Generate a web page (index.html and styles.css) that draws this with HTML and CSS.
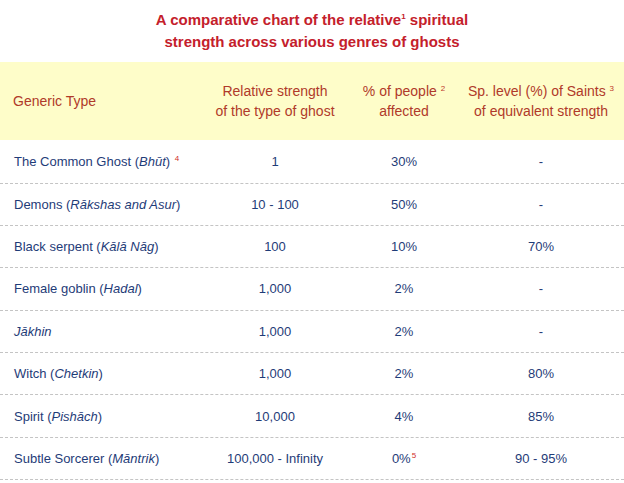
FILE: index.html
```html
<!DOCTYPE html>
<html>
<head>
<meta charset="utf-8">
<link rel="stylesheet" href="styles.css">
</head>
<body>
<div class="page">
  <h1 class="title">A comparative chart of the relative<sup>1</sup> spiritual<br>strength across various genres of ghosts</h1>
  <div class="head">
    <div class="c1">Generic Type</div>
    <div class="cc">Relative strength<br>of the type of ghost</div>
    <div class="cc">% of people <sup>2</sup><br>affected</div>
    <div class="cc wide">Sp. level (%) of Saints <sup>3</sup><br>of equivalent strength</div>
  </div>
  <div class="rows">
    <div class="row"><div class="c1">The Common Ghost (<i>Bhūt</i>) <sup>4</sup></div><div class="cc">1</div><div class="cc">30%</div><div class="cc">-</div></div>
    <div class="row"><div class="c1">Demons (<i>Rākshas and Asur</i>)</div><div class="cc">10 - 100</div><div class="cc">50%</div><div class="cc">-</div></div>
    <div class="row"><div class="c1">Black serpent (<i>Kālā Nāg</i>)</div><div class="cc">100</div><div class="cc">10%</div><div class="cc">70%</div></div>
    <div class="row"><div class="c1">Female goblin (<i>Hadal</i>)</div><div class="cc">1,000</div><div class="cc">2%</div><div class="cc">-</div></div>
    <div class="row"><div class="c1"><i>Jākhin</i></div><div class="cc">1,000</div><div class="cc">2%</div><div class="cc">-</div></div>
    <div class="row"><div class="c1">Witch (<i>Chetkin</i>)</div><div class="cc">1,000</div><div class="cc">2%</div><div class="cc">80%</div></div>
    <div class="row"><div class="c1">Spirit (<i>Pishāch</i>)</div><div class="cc">10,000</div><div class="cc">4%</div><div class="cc">85%</div></div>
    <div class="row"><div class="c1">Subtle Sorcerer (<i>Māntrik</i>)</div><div class="cc">100,000 - Infinity</div><div class="cc">0%<sup>5</sup></div><div class="cc">90 - 95%</div></div>
  </div>
</div>
</body>
</html>
```
FILE: styles.css
```css
html, body {
  margin: 0;
  padding: 0;
  background: #ffffff;
}
.page {
  width: 624px;
  font-family: "Liberation Sans", Arial, sans-serif;
}
.title {
  margin: 0;
  padding-top: 9px;
  height: 53px;
  box-sizing: border-box;
  text-align: center;
  color: #c4202b;
  font-size: 15px;
  line-height: 22px;
  font-weight: bold;
}
.title sup {
  font-size: 8px;
  vertical-align: 6px;
  line-height: 0;
}
.head {
  display: grid;
  grid-template-columns: 215px 120px 138px 136px 1fr;
  align-items: center;
  height: 78px;
  margin-top: 9px;
  background: #fefdc9;
  color: #b03a2a;
  font-size: 14px;
  line-height: 20px;
  white-space: nowrap;
}
.head .c1 {
  padding-left: 13px;
}
.head .wide {
  margin: 0 -12px;
}
.head sup {
  font-size: 8px;
  vertical-align: 5px;
  line-height: 0;
  color: #c0392b;
}
.cc {
  text-align: center;
}
.rows {
  display: flex;
  flex-direction: column;
}
.row {
  display: grid;
  grid-template-columns: 215px 120px 138px 136px 1fr;
  align-items: center;
  height: 42.4px;
  border-bottom: 1px dashed #c4c4c4;
  box-sizing: border-box;
  color: #1f3c78;
  font-size: 13px;
  white-space: nowrap;
}
.row:first-child {
  height: 43.5px;
}
.row .c1 {
  padding-left: 14px;
}
.row sup {
  font-size: 8px;
  vertical-align: 5px;
  line-height: 0;
  color: #d0302a;
  padding-left: 1px;
}
```
